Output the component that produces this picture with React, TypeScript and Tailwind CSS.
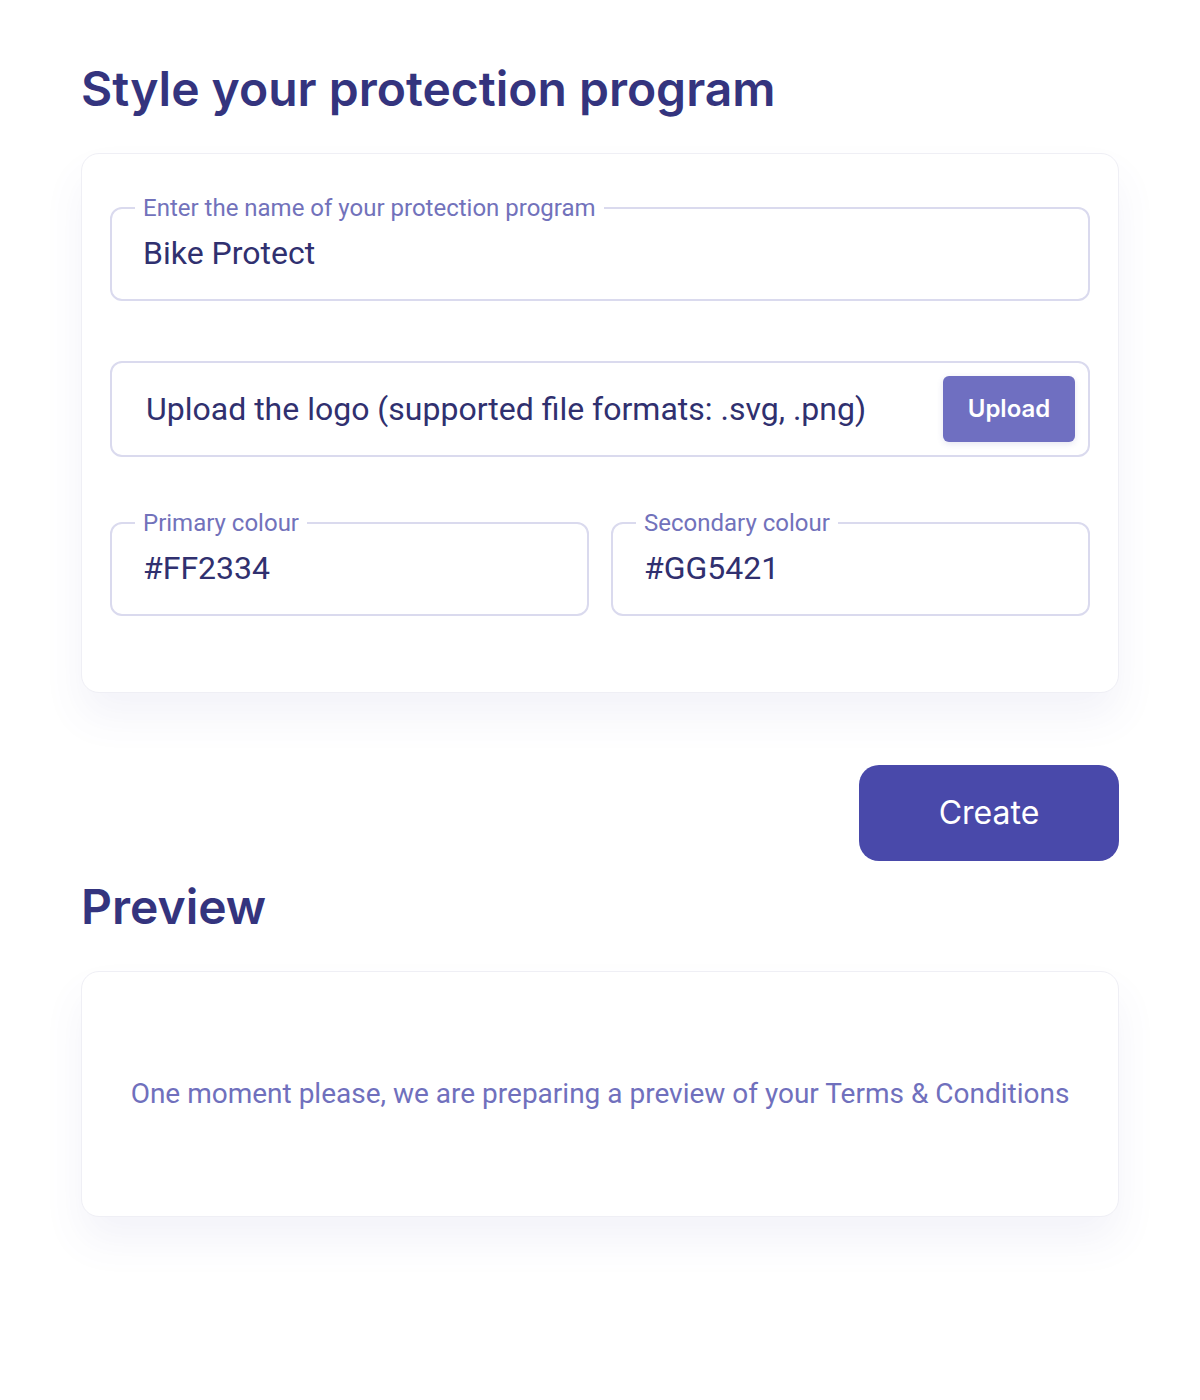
import React from "react";

const inter = "font-['Inter','Noto_Sans',sans-serif]";
const roboto = "font-['Roboto','Liberation_Sans',sans-serif]";

function OutlinedField({ label, value }: { label: string; value: string }) {
  return (
    <fieldset className="rounded-[12px] border-2 border-[#dadaee] pl-[23px] pr-6 pb-[27px] min-w-0">
      <legend className={`${roboto} px-2 text-[24px] leading-[28px] text-[#7272bb]`}>{label}</legend>
      <div className={`${roboto} pl-2 pt-[12px] text-[32px] leading-[38px] text-[#30306f]`}>{value}</div>
    </fieldset>
  );
}

export default function App() {
  return (
    <div className="min-h-[1400px] bg-white px-[81px] pt-[60px] pb-20">
      <h1 className={`${inter} text-[48px] leading-[58px] font-semibold text-[#34347e]`}>
        Style your protection program
      </h1>

      {/* Form card */}
      <div className="mt-[35px] rounded-[18px] border border-[#efeff5] bg-white px-[28px] pt-[40px] pb-[76px] shadow-[0_24px_40px_rgba(90,90,170,0.07)]">
        <OutlinedField label="Enter the name of your protection program" value="Bike Protect" />

        <div className="mt-[60px] flex h-[96px] items-center justify-between rounded-[12px] border-2 border-[#dadaee] pl-[34px] pr-[13px]">
          <span className={`${roboto} text-[32px] text-[#30306f]`}>
            Upload the logo (supported file formats: .svg, .png)
          </span>
          <button className={`${inter} h-[66px] w-[132px] rounded-[6px] bg-[#6f6fc1] text-[24px] font-semibold text-white shadow-[0_2px_6px_rgba(80,80,160,0.15)]`}>
            Upload
          </button>
        </div>

        <div className="mt-[52px] grid grid-cols-2 gap-[22px]">
          <OutlinedField label="Primary colour" value="#FF2334" />
          <OutlinedField label="Secondary colour" value="#GG5421" />
        </div>
      </div>

      <div className="mt-[72px] flex justify-end">
        <button className={`${inter} h-[96px] w-[260px] rounded-[20px] bg-[#4949aa] text-[32px] text-white`}>
          Create
        </button>
      </div>

      <h2 className={`${inter} mt-[17px] text-[48px] leading-[58px] font-semibold text-[#34347e]`}>
        Preview
      </h2>

      {/* Preview card */}
      <div className="mt-[35px] flex h-[246px] items-center justify-center rounded-[18px] border border-[#efeff5] bg-white shadow-[0_24px_40px_rgba(90,90,170,0.07)]">
        <p className={`${roboto} text-[28px] text-[#7070bd]`}>
          One moment please, we are preparing a preview of your Terms &amp; Conditions
        </p>
      </div>
    </div>
  );
}
